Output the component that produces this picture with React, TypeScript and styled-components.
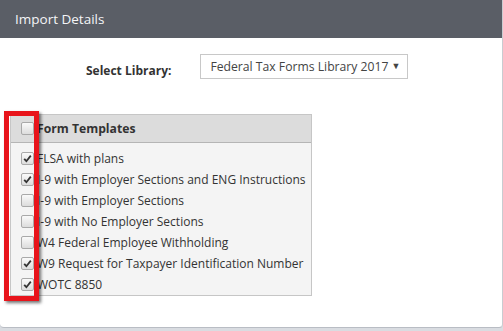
import styled, { createGlobalStyle } from "styled-components"

const Global = createGlobalStyle`
  body {
    margin: 0;
    background: #d9dce1;
    font-family: "Open Sans", "Liberation Sans", sans-serif;
  }
`

const Panel = styled.div`
  width: 502px;
  height: 327px;
  background: #fff;
  border-right: 1px solid #c9ccd1;
  border-bottom: 1px solid #b9bdc4;
  border-radius: 0 0 4px 4px;
  position: relative;
  overflow: hidden;
`

const Header = styled.div`
  height: 38px;
  background: #5a5e66;
  color: #f4f5f7;
  font-size: 13.5px;
  display: flex;
  align-items: center;
  padding-left: 15px;
`

const SelectRow = styled.div`
  display: flex;
  align-items: center;
  margin-top: 16px;
  padding-left: 86px;
  gap: 29px;
`

const Label = styled.div`
  font-size: 12px;
  font-weight: 700;
  color: #333;
  padding-top: 8px;
`

const SelectBox = styled.div`
  box-sizing: border-box;
  width: 208px;
  height: 25px;
  border: 1px solid #c8c8c8;
  display: flex;
  align-items: center;
  justify-content: space-between;
  padding: 0 7px 0 9px;
  font-size: 12.2px;
  color: #444;
  white-space: nowrap;
`

const Arrow = styled.span`
  font-size: 9px;
  color: #444;
  margin-top: -3px;
`

const Table = styled.div`
  margin: 35px 0 0 10px;
  width: 300px;
  border: 1px solid #c6c6c6;
  background: #f4f4f4;
`

const HeadRow = styled.div`
  height: 27px;
  background: #dcdcdc;
  border-bottom: 1px solid #b5b5b5;
  display: flex;
  align-items: center;
  padding-left: 10px;
  gap: 3px;
  font-size: 12.2px;
  font-weight: 700;
  color: #333;
`

const Body = styled.div`
  padding: 5px 0 0;
`

const Row = styled.div`
  height: 21px;
  display: flex;
  align-items: center;
  padding-left: 10px;
  gap: 3px;
  font-size: 12px;
  color: #333;
  white-space: nowrap;
`

const Box = styled.span`
  width: 11px;
  height: 11px;
  border: 1px solid #a9a9a9;
  border-radius: 2px;
  background: linear-gradient(#fafafa, #dcdcdc);
  display: flex;
  align-items: center;
  justify-content: center;
  flex: none;
`

const Highlight = styled.div`
  position: absolute;
  left: 4px;
  top: 111px;
  width: 25px;
  height: 180px;
  border: 5px solid #e8141b;
  box-shadow: 2px 2px 3px rgba(0, 0, 0, 0.55);
`

const Check = ({ on }: { on?: boolean }) => (
  <Box>
    {on && (
      <svg width="9" height="9" viewBox="0 0 9 9">
        <path d="M1.2 4.8 L3.4 7.2 L7.8 1.6" fill="none" stroke="#333" strokeWidth="1.8" />
      </svg>
    )}
  </Box>
)

const items: [string, boolean][] = [
  ["FLSA with plans", true],
  ["I-9 with Employer Sections and ENG Instructions", true],
  ["I-9 with Employer Sections", false],
  ["I-9 with No Employer Sections", false],
  ["W4 Federal Employee Withholding", false],
  ["W9 Request for Taxpayer Identification Number", true],
  ["WOTC 8850", true],
]

export default function App() {
  return (
    <>
      <Global />
      <Panel>
        <Header>Import Details</Header>
        <SelectRow>
          <Label>Select Library:</Label>
          <SelectBox>
            <span>Federal Tax Forms Library 2017</span>
            <Arrow>▼</Arrow>
          </SelectBox>
        </SelectRow>
        <Table>
          <HeadRow>
            <Check />
            <span>Form Templates</span>
          </HeadRow>
          <Body>
            {items.map(([name, on]) => (
              <Row key={name}>
                <Check on={on} />
                <span>{name}</span>
              </Row>
            ))}
          </Body>
        </Table>
        <Highlight />
      </Panel>
    </>
  )
}
